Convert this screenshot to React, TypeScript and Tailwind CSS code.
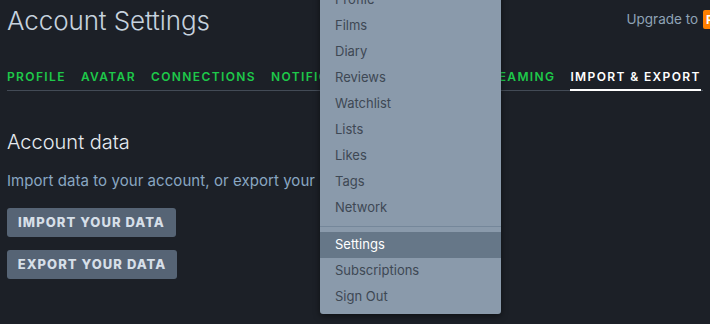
const tabs = ["Profile", "Avatar", "Connections", "Notifications", "Stores & Streaming", "Import & Export"];

const menu = ["Profile", "Films", "Diary", "Reviews", "Watchlist", "Lists", "Likes", "Tags", "Network"];

export default function App() {
  return (
    <div className="relative w-[710px] h-[324px] overflow-hidden bg-[#1c2027] font-['Inter','Liberation_Sans',sans-serif]">
      {/* header */}
      <div className="flex items-start pl-[7px] pt-[4px]">
        <h1 className="text-[26px] leading-[34px] font-light text-[#c6d2de] tracking-[-0.1px]">Account Settings</h1>
        <div className="ml-auto mr-[-24px] flex items-center gap-[5px] pt-[5px]">
          <span className="text-[13.5px] text-[#8fa3b6]">Upgrade to</span>
          <span className="h-[19px] rounded-[2px] bg-[#ff8000] px-[3px] text-[12px] font-bold leading-[19px] text-white">PRO</span>
        </div>
      </div>

      {/* tabs */}
      <nav className="mx-[7px] mt-[31px] flex whitespace-nowrap border-b border-[#434b56]">
        {tabs.map((t, i) => {
          const active = i === tabs.length - 1;
          return (
            <span
              key={t}
              className={`mr-[15px] pb-[4px] text-[12px] font-semibold uppercase leading-[16px] tracking-[0.115em] ${
                active ? "-mb-px border-b-2 border-white text-white" : "text-[#1ec94a]"
              }`}
            >
              {t}
            </span>
          );
        })}
      </nav>

      {/* content */}
      <section className="px-[7px] pt-[38px]">
        <h2 className="text-[20px] font-light leading-[26px] text-[#e6ebf0]">Account data</h2>
        <p className="mt-[16px] whitespace-nowrap text-[15px] leading-[20px] tracking-[0.06px] text-[#89a7c2]">
          Import data to your account, or export your&nbsp;&nbsp;data.
        </p>
        <div className="mt-[17px] flex flex-col items-start gap-[13px]">
          <button className="h-[29px] w-[169px] rounded-[3px] bg-[#566475] text-[13px] font-extrabold uppercase tracking-[0.08em] text-[#d6dfe8]">
            Import your data
          </button>
          <button className="h-[29px] w-[170px] rounded-[3px] bg-[#566475] text-[13px] font-extrabold uppercase tracking-[0.08em] text-[#d6dfe8]">
            Export your data
          </button>
        </div>
      </section>

      {/* account dropdown */}
      <div className="absolute left-[320px] top-[-14px] w-[181px] rounded-[3px] bg-[#8a9aab] pb-[4px] text-[13px] shadow-[0_2px_6px_rgba(0,0,0,0.5)]">
        {menu.map((m) => (
          <div key={m} className="h-[26px] px-[15px] leading-[26px] text-[#3e4854]">
            {m}
          </div>
        ))}
        <div className="mt-[6px] mb-[5px] h-px bg-[#75879a]" />
        <div className="h-[26px] bg-[#667788] px-[15px] leading-[25px] text-white">Settings</div>
        <div className="h-[26px] px-[15px] leading-[25px] text-[#3e4854]">Subscriptions</div>
        <div className="h-[26px] px-[15px] leading-[25px] text-[#3e4854]">Sign Out</div>
      </div>
    </div>
  );
}
